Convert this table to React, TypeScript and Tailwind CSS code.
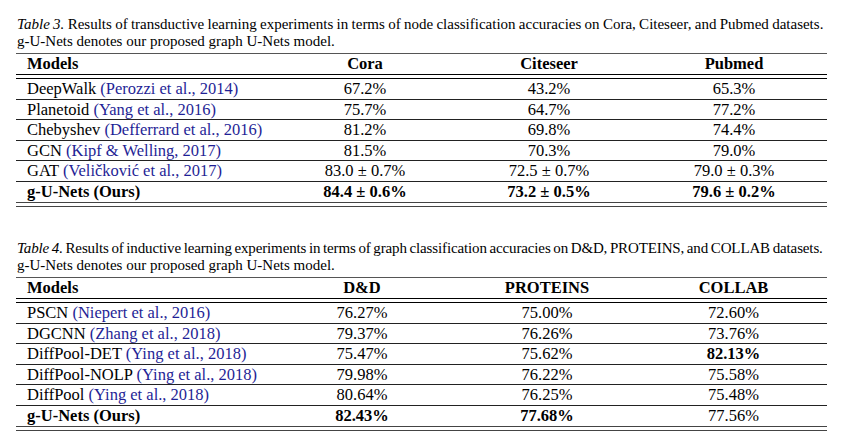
import React from "react";

const Cite = ({ children }: { children: React.ReactNode }) => (
  <span className="text-[#1f1f96]">{children}</span>
);

type Row = { model: React.ReactNode; cells: React.ReactNode[]; bold?: boolean };

const Table = ({
  num,
  caption,
  headers,
  rows,
  cols,
  ws,
}: {
  num: number;
  caption: string;
  headers: string[];
  rows: Row[];
  cols: string;
  ws: string;
}) => (
  <div>
    <div className="leading-[17px] text-[15px] pl-px">
      <div className={`whitespace-nowrap ${ws}`}>
        <i>Table {num}.</i> {caption}
      </div>
      <div className="whitespace-nowrap">g-U-Nets denotes our proposed graph U-Nets model.</div>
    </div>
    <div className="mt-[3px] border-t border-[#555] text-[16.5px] leading-[20px]">
      <div className={`grid ${cols} h-[20px] items-center font-bold`}>
        <div className="pl-[11px]">Models</div>
        {headers.map((h) => (
          <div key={h} className="text-center">
            {h}
          </div>
        ))}
      </div>
      <div className="border-t border-black h-[5px] border-b" />
      {rows.map((r, i) => (
        <div
          key={i}
          className={`grid ${cols} h-[20.5px] items-center ${
            i < rows.length - 1 ? "border-b border-[#222]" : ""
          } ${r.bold ? "font-bold" : ""}`}
        >
          <div className="pl-[11px] whitespace-nowrap">{r.model}</div>
          {r.cells.map((c, j) => (
            <div key={j} className="text-center whitespace-nowrap">
              {c}
            </div>
          ))}
        </div>
      ))}
      <div className="border-t border-[#444] h-[5px] border-b" />
    </div>
  </div>
);

export default function App() {
  const t3: Row[] = [
    { model: <>DeepWalk <Cite>(Perozzi et al., 2014)</Cite></>, cells: ["67.2%", "43.2%", "65.3%"] },
    { model: <>Planetoid <Cite>(Yang et al., 2016)</Cite></>, cells: ["75.7%", "64.7%", "77.2%"] },
    { model: <>Chebyshev <Cite>(Defferrard et al., 2016)</Cite></>, cells: ["81.2%", "69.8%", "74.4%"] },
    { model: <>GCN <Cite>(Kipf &amp; Welling, 2017)</Cite></>, cells: ["81.5%", "70.3%", "79.0%"] },
    { model: <>GAT <Cite>(Veličković et al., 2017)</Cite></>, cells: ["83.0 ± 0.7%", "72.5 ± 0.7%", "79.0 ± 0.3%"] },
    { model: <>g-U-Nets (Ours)</>, cells: ["84.4 ± 0.6%", "73.2 ± 0.5%", "79.6 ± 0.2%"], bold: true },
  ];
  const t4: Row[] = [
    { model: <>PSCN <Cite>(Niepert et al., 2016)</Cite></>, cells: ["76.27%", "75.00%", "72.60%"] },
    { model: <>DGCNN <Cite>(Zhang et al., 2018)</Cite></>, cells: ["79.37%", "76.26%", "73.76%"] },
    { model: <>DiffPool-DET <Cite>(Ying et al., 2018)</Cite></>, cells: ["75.47%", "75.62%", <b key="b">82.13%</b>] },
    { model: <>DiffPool-NOLP <Cite>(Ying et al., 2018)</Cite></>, cells: ["79.98%", "76.22%", "75.58%"] },
    { model: <>DiffPool <Cite>(Ying et al., 2018)</Cite></>, cells: ["80.64%", "76.25%", "75.48%"] },
    {
      model: <b>g-U-Nets (Ours)</b>,
      cells: [<b key="a">82.43%</b>, <b key="c">77.68%</b>, "77.56%"],
    },
  ];
  return (
    <div className="w-[850px] h-[438px] bg-white text-black pl-[16px] pt-[16px] overflow-hidden font-['Liberation_Serif','Times_New_Roman',serif]">
      <div className="w-[811px]">
        <Table
          num={3}
          caption="Results of transductive learning experiments in terms of node classification accuracies on Cora, Citeseer, and Pubmed datasets."
          headers={["Cora", "Citeseer", "Pubmed"]}
          rows={t3}
          cols="grid-cols-[257px_184px_184px_186px]"
          ws="[word-spacing:-0.45px]"
        />
        <div className="h-[33px]" />
        <Table
          num={4}
          caption="Results of inductive learning experiments in terms of graph classification accuracies on D&D, PROTEINS, and COLLAB datasets."
          headers={["D&D", "PROTEINS", "COLLAB"]}
          rows={t4}
          cols="grid-cols-[254px_184px_186px_187px]"
          ws="[word-spacing:-0.95px] tracking-[-0.13px]"
        />
      </div>
    </div>
  );
}
